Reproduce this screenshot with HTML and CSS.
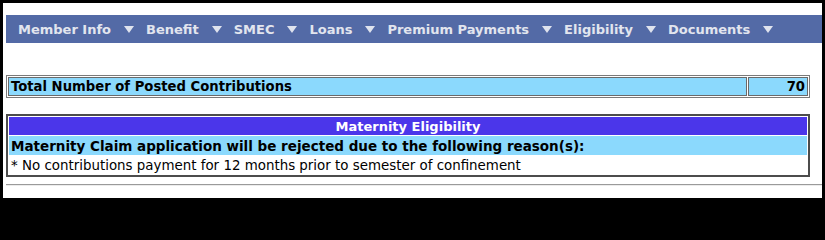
FILE: index.html
```html
<!DOCTYPE html>
<html>
<head>
<meta charset="utf-8">
<link rel="stylesheet" href="styles.css">
</head>
<body>
<div class="frame">
  <nav class="menu">
    <span class="item">Member Info</span><svg class="arrow" viewBox="0 0 10 7"><path d="M0 0H10L5 7Z"/></svg>
    <span class="item">Benefit</span><svg class="arrow" viewBox="0 0 10 7"><path d="M0 0H10L5 7Z"/></svg>
    <span class="item">SMEC</span><svg class="arrow" viewBox="0 0 10 7"><path d="M0 0H10L5 7Z"/></svg>
    <span class="item">Loans</span><svg class="arrow" viewBox="0 0 10 7"><path d="M0 0H10L5 7Z"/></svg>
    <span class="item">Premium Payments</span><svg class="arrow" viewBox="0 0 10 7"><path d="M0 0H10L5 7Z"/></svg>
    <span class="item">Eligibility</span><svg class="arrow" viewBox="0 0 10 7"><path d="M0 0H10L5 7Z"/></svg>
    <span class="item">Documents</span><svg class="arrow" viewBox="0 0 10 7"><path d="M0 0H10L5 7Z"/></svg>
  </nav>
  <table class="total">
    <tr>
      <td class="label">Total Number of Posted Contributions</td>
      <td class="value">70</td>
    </tr>
  </table>
  <table class="elig">
    <tr><td class="head">Maternity Eligibility</td></tr>
    <tr><td class="reason-title">Maternity Claim application will be rejected due to the following reason(s):</td></tr>
    <tr><td class="reason">* No contributions payment for 12 months prior to semester of confinement</td></tr>
  </table>
  <div class="rule"></div>
</div>
</body>
</html>
```
FILE: styles.css
```css
html, body {
  margin: 0;
  padding: 0;
  background: #000;
}
.frame {
  box-sizing: border-box;
  width: 825px;
  height: 204px;
  border-style: solid;
  border-color: #000;
  border-width: 3px 3px 6px 3px;
  background: #fff;
  padding: 12px 0 0 3px;
  font-family: "DejaVu Sans", Verdana, sans-serif;
}
.menu {
  display: flex;
  align-items: center;
  height: 28px;
  background: #536aa6;
  padding-left: 12px;
  color: #e2e5ee;
  font-weight: bold;
  font-size: 13px;
}
.arrow {
  width: 10px;
  height: 7px;
  fill: #dfe3ee;
  margin: 1px 12px 0 13px;
}
table {
  border-collapse: separate;
  width: 804px;
}
.total {
  margin-top: 32px;
  border: 1px solid #7a7a7a;
  border-spacing: 1px;
}
.total td {
  background: #8bd9fd;
  border: 1px solid #6a6a6a;
  height: 17px;
  padding: 0 2px;
  font-weight: bold;
  font-size: 13.2px;
  color: #000;
}
.total .value {
  width: 54px;
  text-align: right;
}
.elig {
  margin-top: 16px;
  border: 2px solid #4c4c4c;
  border-spacing: 1px;
  font-size: 13px;
}
.elig td {
  padding: 0 2px;
}
.head {
  background: #4b36ea;
  color: #fff;
  font-weight: bold;
  text-align: center;
  height: 18px;
}
.reason-title {
  background: #8bd9fd;
  font-weight: bold;
  font-size: 13.5px;
  height: 19px;
}
.reason {
  font-size: 13.4px;
  height: 18px;
}
.rule {
  margin-top: 7px;
  height: 0;
  border-top: 1px solid #9a9a9a;
  border-bottom: 1px solid #ececec;
}
```
